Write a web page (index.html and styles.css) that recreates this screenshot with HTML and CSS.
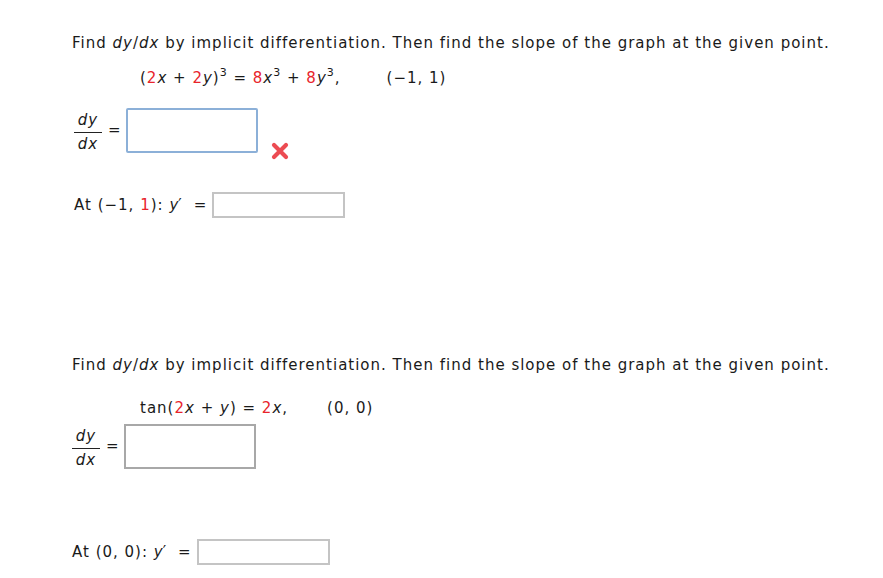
FILE: index.html
```html
<!DOCTYPE html>
<html>
<head>
<meta charset="utf-8">
<link rel="stylesheet" href="styles.css">
</head>
<body>
<div class="page">
  <div class="q q1">
    <p class="prompt">Find <i>dy</i>/<i>dx</i> by implicit differentiation. Then find the slope of the graph at the given point.</p>
    <div class="eq eq1">(<span class="r">2</span><i>x</i> + <span class="r">2</span><i>y</i>)<sup>3</sup> = <span class="r">8</span><i>x</i><sup>3</sup> + <span class="r">8</span><i>y</i><sup>3</sup>,<span class="pt pt1">(−1, 1)</span></div>
    <div class="ans ans1">
      <span class="frac"><span class="num"><i>dy</i></span><span class="den"><i>dx</i></span></span>
      <span class="eqs">=</span>
      <span class="box big blue"></span>
      <svg class="wrong" width="18" height="18" viewBox="0 0 18 18"><path d="M3 3 L15 15 M15 3 L3 15" stroke="#ec4b52" stroke-width="4.2" stroke-linecap="round"/></svg>
    </div>
    <div class="at at1"><span class="lbl">At (−1, <span class="r">1</span>): <i>y</i><span class="pr">′</span></span><span class="eqa">=</span><span class="box small"></span></div>
  </div>
  <div class="q q2">
    <p class="prompt">Find <i>dy</i>/<i>dx</i> by implicit differentiation. Then find the slope of the graph at the given point.</p>
    <div class="eq eq2">tan(<span class="r">2</span><i>x</i> + <i>y</i>) = <span class="r">2</span><i>x</i>,<span class="pt pt2">(0, 0)</span></div>
    <div class="ans ans2">
      <span class="frac"><span class="num"><i>dy</i></span><span class="den"><i>dx</i></span></span>
      <span class="eqs">=</span>
      <span class="box big gray"></span>
    </div>
    <div class="at at2"><span class="lbl">At (0, 0): <i>y</i><span class="pr">′</span></span><span class="eqa">=</span><span class="box small"></span></div>
  </div>
</div>
</body>
</html>
```
FILE: styles.css
```css
html, body {
  margin: 0;
  padding: 0;
  background: #fff;
}
body {
  font-family: "DejaVu Sans", Verdana, sans-serif;
  font-size: 15px;
  letter-spacing: 1px;
  color: #1a1a1a;
}
.page {
  padding-left: 72px;
  width: 811px;
}
i {
  font-style: italic;
}
.r {
  color: #e8242b;
}
sup {
  font-size: 11px;
  line-height: 0;
  vertical-align: 7px;
}
.prompt {
  margin: 0;
  line-height: 20px;
  height: 20px;
  white-space: nowrap;
}
.q1 .prompt {
  padding-top: 33px;
}
.q2 .prompt {
  margin-top: 137px;
}
.eq {
  line-height: 20px;
  height: 20px;
  padding-left: 68px;
  white-space: nowrap;
}
.eq1 {
  margin-top: 15px;
}
.eq2 {
  margin-top: 23px;
}
.pt1 {
  margin-left: 46px;
}
.pt2 {
  margin-left: 39px;
}
.ans {
  display: flex;
  align-items: center;
  height: 46px;
}
.ans1 {
  margin-top: 19px;
  padding-left: 2px;
}
.ans2 {
  margin-top: 5px;
}
.frac {
  display: inline-flex;
  flex-direction: column;
  align-items: center;
  width: 28px;
  flex-shrink: 0;
  margin-top: 4px;
}
.num {
  line-height: 20px;
  border-bottom: 1px solid #222;
  width: 100%;
  text-align: center;
  padding-bottom: 2px;
}
.den {
  line-height: 20px;
  padding-top: 1px;
}
.eqs {
  margin-left: 6px;
  margin-right: 4px;
}
.box {
  display: block;
  box-sizing: border-box;
  background: #fff;
  flex-shrink: 0;
}
.big {
  width: 132px;
  height: 45px;
}
.blue {
  border: 2px solid #8cb0d8;
  border-radius: 2px;
}
.gray {
  border: 2px solid #a8a8a8;
}
.wrong {
  align-self: flex-end;
  flex-shrink: 0;
  margin-left: 13px;
  margin-bottom: -7px;
}
.small {
  width: 133px;
  height: 26px;
  border: 2px solid #c4c4c4;
}
.at {
  display: flex;
  align-items: center;
  height: 26px;
  white-space: pre;
}
.lbl {
  line-height: 26px;
}
.pr {
  letter-spacing: 0;
  margin-left: -1px;
}
.eqa {
  line-height: 26px;
  letter-spacing: 0;
  margin-left: 12px;
}
.at .box {
  margin-left: 6px;
}
.at1 {
  margin-top: 39px;
  padding-left: 2px;
}
.at2 {
  margin-top: 70px;
}
```
